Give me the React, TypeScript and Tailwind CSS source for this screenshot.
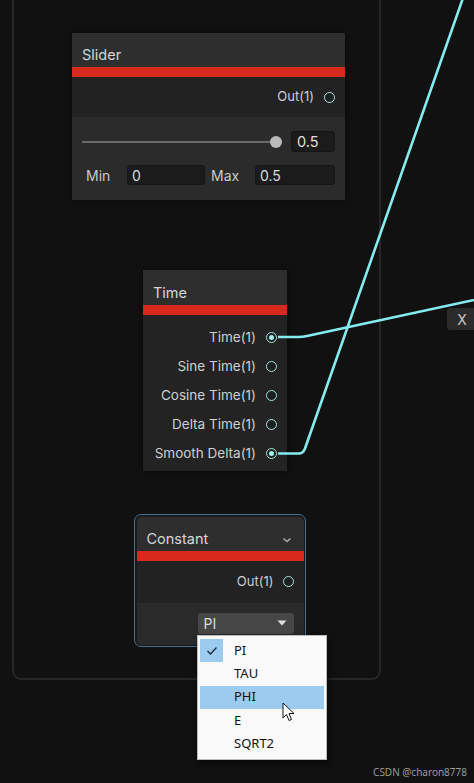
import React from "react";

const ui = { fontFamily: "Inter, 'Noto Sans', sans-serif" };
const win = { fontFamily: "'Noto Sans', 'Open Sans', sans-serif" };

function Port({ on = false }: { on?: boolean }) {
  return (
    <span className="flex h-[11px] w-[11px] shrink-0 items-center justify-center rounded-full border-[1.5px] border-[#a9e3dc] bg-[#1b1f1f]">
      {on && <span className="h-[5px] w-[5px] rounded-full bg-[#9ff2ec]" />}
    </span>
  );
}

function Header({ title, chevron = false, h }: { title: string; chevron?: boolean; h: string }) {
  return (
    <>
      <div className={`flex items-end justify-between bg-[#2e2e2e] pl-[10px] pr-[12px] pb-[2px] ${h}`}>
        <span className="text-[14.5px] leading-[20px] text-[#d6d6d6]">{title}</span>
        {chevron && (
          <svg width="10" height="8" viewBox="0 0 10 8" className="mb-[5px]">
            <path d="M1.5 2.5 L5 5.5 L8.5 2.5" stroke="#a8a8a8" strokeWidth="1.6" fill="none" />
          </svg>
        )}
      </div>
      <div className="h-[10px] bg-[#d9291c]" />
    </>
  );
}

function SliderNode() {
  return (
    <div className="absolute left-[72px] top-[33px] flex w-[273px] flex-col shadow-[0_0_6px_rgba(0,0,0,0.6)]" style={ui}>
      <Header title="Slider" h="h-[34px]" />
      <div className="flex h-[40px] items-center justify-end gap-[10px] bg-[#222222] pr-[10px]">
        <span className="text-[13px] text-[#cfcfcf]">Out(1)</span>
        <Port />
      </div>
      <div className="flex h-[83px] flex-col gap-[13px] bg-[#2b2b2b] pl-[10px] pr-[10px] pt-[14px]">
        <div className="flex h-[21px] items-center">
          <div className="relative flex h-[12px] w-[200px] items-center">
            <div className="h-[2px] w-full bg-[#6b6b6b]" />
            <div className="absolute right-0 h-[12px] w-[12px] rounded-full bg-[#b9b9b9]" />
          </div>
          <div className="ml-auto flex h-[21px] w-[44px] items-center rounded-[3px] border border-[#151515] bg-[#1b1b1b] pl-[5px] text-[14.5px] text-[#dddddd]">
            0.5
          </div>
        </div>
        <div className="flex h-[20px] items-center text-[14px] text-[#c9c9c9]">
          <span className="ml-[4px] w-[41px]">Min</span>
          <div className="flex h-[20px] w-[78px] items-center rounded-[3px] border border-[#151515] bg-[#1b1b1b] pl-[4px] text-[#dddddd]">0</div>
          <span className="ml-[6px] w-[44px]">Max</span>
          <div className="flex h-[20px] w-[80px] items-center rounded-[3px] border border-[#151515] bg-[#1b1b1b] pl-[4px] text-[#dddddd]">0.5</div>
        </div>
      </div>
    </div>
  );
}

const timeRows = [
  { label: "Time(1)", on: true },
  { label: "Sine Time(1)", on: false },
  { label: "Cosine Time(1)", on: false },
  { label: "Delta Time(1)", on: false },
  { label: "Smooth Delta(1)", on: true },
];

function TimeNode() {
  return (
    <div className="absolute left-[143px] top-[270px] flex w-[144px] flex-col shadow-[0_0_6px_rgba(0,0,0,0.6)]" style={ui}>
      <Header title="Time" h="h-[35px]" />
      <div className="flex flex-col bg-[#232323] pb-[3px] pr-[10px] pt-[8px]">
        {timeRows.map((r) => (
          <div key={r.label} className="flex h-[29px] items-center justify-end gap-[10px]">
            <span className="text-[13.5px] text-[#d0d0d0]">{r.label}</span>
            <Port on={r.on} />
          </div>
        ))}
      </div>
    </div>
  );
}

function ConstantNode() {
  return (
    <div
      className="absolute left-[134px] top-[514px] w-[172px] overflow-hidden rounded-[7px] border-[1.5px] border-[#44708f] bg-[#1a1a1a] p-[1.5px]"
      style={ui}
    >
      <div className="flex flex-col overflow-hidden rounded-[5px]">
        <Header title="Constant" chevron h="h-[34px]" />
        <div className="flex h-[42px] items-center justify-end gap-[9px] bg-[#222222] pr-[10px]">
          <span className="text-[13px] text-[#cfcfcf]">Out(1)</span>
          <Port />
        </div>
        <div className="flex h-[42px] items-start justify-end bg-[#2a2a2a] pr-[10px] pt-[10px]">
          <div className="flex h-[21px] w-[96px] items-center justify-between rounded-[3px] bg-[#474747] pl-[6px] pr-[7px]">
            <span className="text-[14px] text-[#dcdcdc]">PI</span>
            <svg width="10" height="6" viewBox="0 0 10 6">
              <path d="M0.5 0.5 L9.5 0.5 L5 5.5 Z" fill="#e0e0e0" />
            </svg>
          </div>
        </div>
      </div>
    </div>
  );
}

const options = ["PI", "TAU", "PHI", "E", "SQRT2"];

function Popup() {
  return (
    <div
      className="absolute left-[197px] top-[635px] flex w-[130px] flex-col border border-[#bdbdbd] bg-[#f9f9f9] px-[2px] pb-[4px] pt-[3px] shadow-[2px_3px_6px_rgba(0,0,0,0.6)]"
      style={win}
    >
      {options.map((o, i) => (
        <div
          key={o}
          className={`flex h-[23.3px] items-center ${i === 2 ? "bg-[#9dcbf0]" : ""}`}
        >
          <div className={`flex h-full w-[23px] items-center justify-center ${i === 0 ? "bg-[#9dcbf0]" : ""}`}>
            {i === 0 && (
              <svg width="12" height="10" viewBox="0 0 12 10">
                <path d="M1.5 5 L4.5 8 L10.5 1.5" stroke="#1d2a3a" strokeWidth="1.4" fill="none" />
              </svg>
            )}
          </div>
          <span className="ml-[11px] text-[13px] text-[#111111]">{o}</span>
        </div>
      ))}
    </div>
  );
}

export default function App() {
  return (
    <div className="relative h-[783px] w-[474px] overflow-hidden bg-[#111111]">
      {/* outer group panel */}
      <div className="absolute left-[12px] top-[-30px] h-[710px] w-[369px] rounded-[9px] border-2 border-[#262626]" />

      <SliderNode />
      <TimeNode />
      <ConstantNode />

      {/* wires */}
      <svg className="pointer-events-none absolute left-0 top-0" width="474" height="783">
        <g stroke="#84ecee" strokeWidth="2.6" fill="none" strokeLinejoin="round">
          <path d="M278 337 L298 337 Q303 337 307 336 L474 300" />
          <path d="M278 453.5 L299 453.5 Q303 453.5 305 448.5 L463 -2" />
        </g>
      </svg>

      {/* close button */}
      <div className="absolute left-[447px] top-[308px] flex h-[22px] w-[30px] items-center justify-center rounded-[3px] bg-[#2b2b2b] text-[14px] text-[#c9c9c9]" style={ui}>
        X
      </div>

      <Popup />

      {/* mouse cursor */}
      <svg className="absolute left-[282px] top-[702px]" width="14" height="21" viewBox="0 0 14 21">
        <path d="M1 1 L1 16 L4.5 12.5 L7 18.5 L9.5 17.5 L7 11.5 L12 11.5 Z" fill="#ffffff" stroke="#111111" strokeWidth="1" strokeLinejoin="round" />
      </svg>

      <div className="absolute bottom-[3px] right-[7px] text-[10px] text-[#9a9a9a]" style={win}>
        CSDN @charon8778
      </div>
    </div>
  );
}
